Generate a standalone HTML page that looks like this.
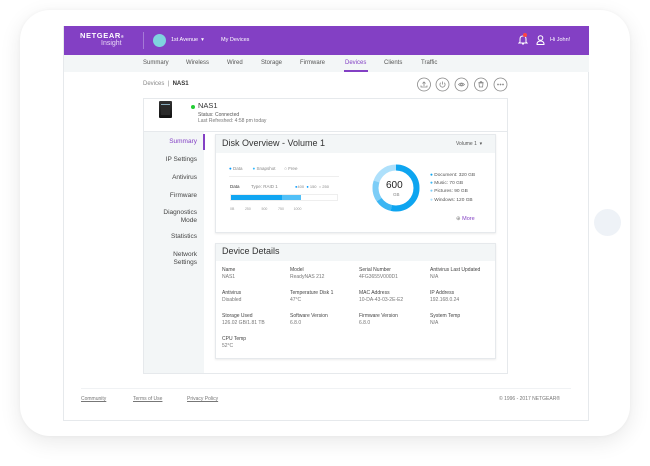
<!DOCTYPE html>
<html><head><meta charset="utf-8"><style>
*{margin:0;padding:0;box-sizing:border-box}
body{width:650px;height:466px;background:#fff;position:relative;overflow:hidden;font-family:"Liberation Sans",sans-serif;color:#333}
.a{position:absolute}
.t{position:absolute;white-space:nowrap}
.tablet{left:20px;top:10px;width:610px;height:426px;border-radius:30px;background:#fff;box-shadow:0 6px 22px rgba(0,0,0,.09),0 0 4px rgba(0,0,0,.04)}
.screen{left:63px;top:26px;width:526px;height:395px;border:1px solid #e6e9ec;border-top:none;background:#fff}
.hdr{left:64px;top:26px;width:525px;height:29px;background:#8340c4}
.nav{left:64px;top:55px;width:525px;height:17px;background:#f3f6f7}
.nav span{position:absolute;top:5px;font-size:6px;color:#555}
.ic{position:absolute;top:77px}
.card{border:1px solid #e6e9ec}
.side span{position:absolute;right:0;font-size:6.5px;color:#444;text-align:right;line-height:8px}
.lbl{font-size:5px;color:#444}
.val{font-size:5px;color:#777}
</style></head><body>
<div class="a tablet"></div>
<div class="a" style="left:594px;top:209px;width:27px;height:27px;border-radius:50%;background:#eef2f7"></div>
<div class="a screen"></div>
<div class="a hdr"></div>
<div class="t" style="left:80px;top:31px;color:#fff;font-weight:bold;font-size:7.5px;letter-spacing:.6px">NETGEAR<span style="font-size:4px">®</span></div>
<div class="t" style="left:101px;top:40px;color:#e8d8f6;font-size:7px">Insight</div>
<div class="a" style="left:143px;top:32px;width:1px;height:17px;background:#a57ad6"></div>
<div class="a" style="left:153px;top:34px;width:13px;height:13px;border-radius:50%;background:#7fd3df"></div>
<div class="t" style="left:171px;top:37px;color:#fff;font-size:5.5px">1st Avenue &nbsp;▾</div>
<div class="t" style="left:221px;top:37px;color:#fff;font-size:5.5px">My Devices</div>
<svg class="a" style="left:518px;top:34px" width="10" height="11" viewBox="0 0 10 11"><path d="M2 8 V5 Q2 2 5 2 Q8 2 8 5 V8 L9 9 H1 Z" fill="none" stroke="#fff" stroke-width="1"/><path d="M4 10 H6" stroke="#fff"/></svg>
<div class="a" style="left:523px;top:33px;width:4px;height:4px;border-radius:50%;background:#f44"></div>
<svg class="a" style="left:536px;top:35px" width="9" height="10" viewBox="0 0 9 10"><circle cx="4.5" cy="3" r="2.3" fill="none" stroke="#fff"/><path d="M1 9.5 Q1 6 4.5 6 Q8 6 8 9.5Z" fill="none" stroke="#fff"/></svg>
<div class="t" style="left:550px;top:37px;color:#fff;font-size:5.5px">Hi John!</div>
<div class="a nav"><span style="left:79px">Summary</span><span style="left:122px">Wireless</span><span style="left:163px">Wired</span><span style="left:197px">Storage</span><span style="left:236px">Firmware</span><span style="left:281px;color:#8340c4">Devices</span><span style="left:320px">Clients</span><span style="left:357px">Traffic</span></div>
<div class="a" style="left:344px;top:70px;width:24px;height:1.5px;background:#8340c4"></div>
<div class="t" style="left:143px;top:81px;font-size:6px;color:#888">Devices &nbsp;| &nbsp;<b style="color:#333">NAS1</b></div>
<svg class="ic" style="left:416px" width="100" height="15" viewBox="0 0 100 15" fill="none" stroke="#888" stroke-width=".8">
<circle cx="8" cy="7.5" r="6.5"/><path d="M5 8.5v1.5h6v-1.5M8 9V5M6.5 6.5L8 5l1.5 1.5"/>
<circle cx="26.5" cy="7.5" r="6.5"/><path d="M24.7 5.7a2.6 2.6 0 1 0 3.6 0M26.5 4.5v3"/>
<circle cx="45.5" cy="7.5" r="6.5"/><path d="M42.5 7.5q3-3 6 0q-3 3-6 0z"/><circle cx="45.5" cy="7.5" r=".9"/>
<circle cx="65" cy="7.5" r="6.5"/><path d="M63 6h4l-.4 4h-3.2zM62.5 5.5h5M64.3 5.5v-.8h1.4v.8"/>
<circle cx="84.5" cy="7.5" r="6.5"/><circle cx="82" cy="7.5" r=".5" fill="#888"/><circle cx="84.5" cy="7.5" r=".5" fill="#888"/><circle cx="87" cy="7.5" r=".5" fill="#888"/>
</svg>
<div class="a card" style="left:143px;top:98px;width:365px;height:276px"></div>
<div class="a" style="left:144px;top:131px;width:60px;height:242px;background:#f3f6f7;border-top:1px solid #e6e9ec"></div>
<div class="a" style="left:204px;top:131px;width:303px;height:1px;background:#e6e9ec"></div>
<div class="a" style="left:159px;top:101px;width:13px;height:17px;background:linear-gradient(#333,#111);border-radius:1px"></div>
<div class="a" style="left:161px;top:104px;width:9px;height:11px;background:#2a2a2a;border-top:1px solid #8ab"></div>
<div class="a" style="left:191px;top:105px;width:4px;height:4px;border-radius:50%;background:#2c3"></div>
<div class="t" style="left:198px;top:101px;font-size:7.5px">NAS1</div>
<div class="t" style="left:198px;top:112px;font-size:5px;color:#555">Status: Connected</div>
<div class="t" style="left:198px;top:118px;font-size:5px;color:#777">Last Refreshed: 4:58 pm today</div>
<div class="a side" style="left:144px;top:131px;width:53px;height:200px">
<span style="top:7px;color:#8340c4">Summary</span><span style="top:25px">IP Settings</span><span style="top:43px">Antivirus</span><span style="top:61px">Firmware</span><span style="top:78px">Diagnostics<br>Mode</span><span style="top:102px">Statistics</span><span style="top:120px">Network<br>Settings</span></div>
<div class="a" style="left:203px;top:134px;width:2px;height:16px;background:#8340c4"></div>
<div class="a card" style="left:215px;top:134px;width:281px;height:99px;box-shadow:0 1px 2px rgba(0,0,0,.08)"></div>
<div class="a" style="left:216px;top:135px;width:279px;height:18px;background:#f3f6f7"></div>
<div class="t" style="left:222px;top:138px;font-size:9px;color:#333">Disk Overview - Volume 1</div>
<div class="t" style="left:456px;top:141px;font-size:5px;color:#555">Volume 1 &nbsp;▾</div>
<div class="t" style="left:229px;top:166px;font-size:4.5px;color:#888"><span style="color:#09f">●</span> Data &nbsp;&nbsp;&nbsp;&nbsp;&nbsp;&nbsp;&nbsp;<span style="color:#3bf">●</span> Snapshot &nbsp;&nbsp;&nbsp;&nbsp;&nbsp;&nbsp;○ Free</div>
<div class="a" style="left:229px;top:176px;width:110px;height:1px;background:#eee"></div>
<div class="t" style="left:230px;top:184px;font-size:4.5px;color:#333">Data</div>
<div class="t" style="left:251px;top:184px;font-size:4.5px;color:#888">Type: RAID 1</div>
<div class="t" style="left:295px;top:184px;font-size:4px;color:#888"><span style="color:#09f">●</span>400 &nbsp;<span style="color:#09f">●</span> 150 &nbsp;○ 250</div>
<div class="a" style="left:230px;top:194px;width:108px;height:7px;border:1px solid #eee"></div>
<div class="a" style="left:231px;top:195px;width:51px;height:5px;background:#11a6f2"></div>
<div class="a" style="left:282px;top:195px;width:19px;height:5px;background:#52c0f7"></div>
<div class="t" style="left:230px;top:207px;font-size:3.5px;color:#999">0B &nbsp;&nbsp;&nbsp;&nbsp;&nbsp;&nbsp;&nbsp;&nbsp;&nbsp;&nbsp;250 &nbsp;&nbsp;&nbsp;&nbsp;&nbsp;&nbsp;&nbsp;&nbsp;&nbsp;&nbsp;500 &nbsp;&nbsp;&nbsp;&nbsp;&nbsp;&nbsp;&nbsp;&nbsp;&nbsp;&nbsp;750 &nbsp;&nbsp;&nbsp;&nbsp;&nbsp;&nbsp;&nbsp;&nbsp;&nbsp;1000</div>
<svg class="a" style="left:372px;top:164px" width="48" height="48" viewBox="0 0 48 48">
<circle cx="24" cy="24" r="20.5" fill="none" stroke="#aee0fb" stroke-width="6"/>
<circle cx="24" cy="24" r="20.5" fill="none" stroke="#0ea5f0" stroke-width="6" stroke-dasharray="69 200" transform="rotate(-90 24 24)"/>
<circle cx="24" cy="24" r="20.5" fill="none" stroke="#3bb6f3" stroke-width="6" stroke-dasharray="0 69 15 200" transform="rotate(-90 24 24)"/>
<circle cx="24" cy="24" r="20.5" fill="none" stroke="#7ccdf7" stroke-width="6" stroke-dasharray="0 84 19 200" transform="rotate(-90 24 24)"/></svg>
<div class="t" style="left:386px;top:180px;font-size:10px;color:#222">600</div>
<div class="t" style="left:393px;top:192px;font-size:4.5px;color:#888">GB</div>
<div class="t" style="left:430px;top:172px;font-size:4.8px;color:#555;line-height:8.2px"><span style="color:#0ea5f0">●</span> Document: 320 GB<br><span style="color:#3bb6f3">●</span> Music: 70 GB<br><span style="color:#7ccdf7">●</span> Pictures: 90 GB<br><span style="color:#aee0fb">●</span> Windows: 120 GB</div>
<div class="t" style="left:456px;top:216px;font-size:5.5px;color:#8340c4"><span style="color:#888">⊕</span> More</div>
<div class="a card" style="left:215px;top:243px;width:281px;height:116px;box-shadow:0 1px 2px rgba(0,0,0,.08)"></div>
<div class="a" style="left:216px;top:244px;width:279px;height:17px;background:#f3f6f7"></div>
<div class="t" style="left:222px;top:246px;font-size:9px;color:#333">Device Details</div>
<div class="a" style="left:222px;top:267px;font-size:5px;line-height:7px">
<div class="a" style="left:0;top:0"><div class="t lbl">Name</div><div class="t val" style="top:7px">NAS1</div></div>
<div class="a" style="left:68px;top:0"><div class="t lbl">Model</div><div class="t val" style="top:7px">ReadyNAS 212</div></div>
<div class="a" style="left:137px;top:0"><div class="t lbl">Serial Number</div><div class="t val" style="top:7px">4FG3655V000D1</div></div>
<div class="a" style="left:208px;top:0"><div class="t lbl">Antivirus Last Updated</div><div class="t val" style="top:7px">N/A</div></div>
<div class="a" style="left:0;top:23px"><div class="t lbl">Antivirus</div><div class="t val" style="top:7px">Disabled</div></div>
<div class="a" style="left:68px;top:23px"><div class="t lbl">Temperature Disk 1</div><div class="t val" style="top:7px">47°C</div></div>
<div class="a" style="left:137px;top:23px"><div class="t lbl">MAC Address</div><div class="t val" style="top:7px">10-DA-43-03-2E-E2</div></div>
<div class="a" style="left:208px;top:23px"><div class="t lbl">IP Address</div><div class="t val" style="top:7px">192.168.0.24</div></div>
<div class="a" style="left:0;top:46px"><div class="t lbl">Storage Used</div><div class="t val" style="top:7px">126.02 GB/1.81 TB</div></div>
<div class="a" style="left:68px;top:46px"><div class="t lbl">Software Version</div><div class="t val" style="top:7px">6.8.0</div></div>
<div class="a" style="left:137px;top:46px"><div class="t lbl">Firmware Version</div><div class="t val" style="top:7px">6.8.0</div></div>
<div class="a" style="left:208px;top:46px"><div class="t lbl">System Temp</div><div class="t val" style="top:7px">N/A</div></div>
<div class="a" style="left:0;top:69px"><div class="t lbl">CPU Temp</div><div class="t val" style="top:7px">52°C</div></div>
</div>
<div class="a" style="left:81px;top:388px;width:490px;height:1px;background:#f0f2f4"></div>
<div class="t" style="left:81px;top:396px;font-size:5px;color:#777;text-decoration:underline">Community</div>
<div class="t" style="left:133px;top:396px;font-size:5px;color:#777;text-decoration:underline">Terms of Use</div>
<div class="t" style="left:187px;top:396px;font-size:5px;color:#777;text-decoration:underline">Privacy Policy</div>
<div class="t" style="left:499px;top:396px;font-size:5px;color:#777">© 1996 - 2017 NETGEAR®</div>
</body></html>
